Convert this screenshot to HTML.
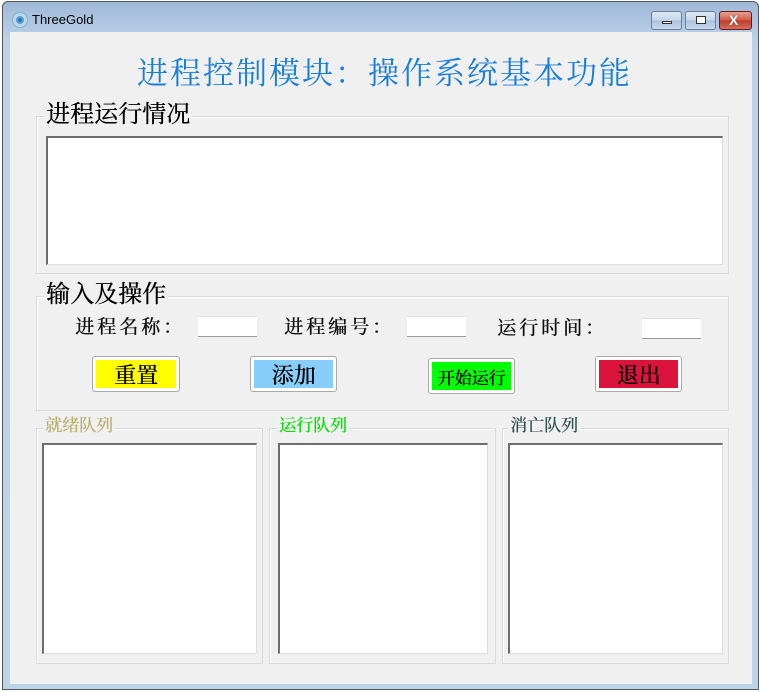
<!DOCTYPE html>
<html><head><meta charset="utf-8"><style>
*{margin:0;padding:0;box-sizing:border-box}
body{width:759px;height:692px;overflow:hidden;background:#fff;font-family:"Liberation Serif","Noto Serif CJK SC",serif;position:relative}
.frame{position:absolute;left:2px;top:1px;width:757px;height:689px;border:1px solid #555;border-radius:6px 6px 0 0;background:linear-gradient(#9fb9d8,#bcd2ea 40px,#bcd3ea)}
.client{position:absolute;left:10px;top:32px;width:742px;height:652px;background:#f0f0f0}
.a{position:absolute}
.grp{position:absolute;border:1px solid #d9d9d9;box-shadow:inset 1px 1px 0 #fff}
.leg{position:absolute;background:#f0f0f0;padding:0 2px;white-space:nowrap;line-height:1;text-shadow:0.4px 0 0 currentColor}
.box{position:absolute;background:#fff;border-top:2px solid #6e6e6e;border-left:2px solid #6e6e6e;border-right:1px solid #ddd;border-bottom:1px solid #ddd}
.inp{position:absolute;background:#fff;border-bottom:1px solid #999;border-top:1px solid #e0e0e0}
.btn{position:absolute;border:1px solid #aaa;border-radius:3px;background:#fff;padding:3px}
.btn div{width:100%;height:100%;display:flex;align-items:center;justify-content:center;font-size:22px;color:#000;text-shadow:0.5px 0 0 #000}
.lbl{position:absolute;font-size:19px;letter-spacing:3px;line-height:1;color:#111;text-shadow:0.5px 0 0 #111}
.wb{position:absolute;top:11px;height:19px;border:1px solid #6e7d90;border-radius:3px;background:linear-gradient(#dfe9f5,#c2d5ea 50%,#a9c0dc 51%,#c9dbef)}
</style></head><body>
<div class="frame"></div>
<svg class="a" style="left:11px;top:11px" width="18" height="18"><circle cx="9" cy="9" r="7.5" fill="#bcd7ea" stroke="#7fb2d6"/><circle cx="9" cy="9" r="4" fill="#5aa0cc"/><circle cx="9" cy="9" r="2" fill="#2b78b0"/></svg>
<div class="a" style="left:32px;top:12px;font:13px 'Liberation Sans',sans-serif;color:#000">ThreeGold</div>
<div class="wb" style="left:651px;width:31px"><div class="a" style="left:10px;top:9px;width:10px;height:3px;background:#fff;border:1px solid #333"></div></div>
<div class="wb" style="left:685px;width:31px"><div class="a" style="left:10px;top:4px;width:10px;height:8px;background:#fff;border:1px solid #333"></div></div>
<div class="wb" style="left:719px;width:33px;border-color:#6b1a14;background:linear-gradient(#e6a090,#d05a44 50%,#c0392b 51%,#d2705a)"><div class="a" style="left:9px;top:0;color:#fff;font:bold 14px 'Liberation Sans',sans-serif;text-shadow:0 0 1px #333">X</div></div>
<div class="client">
<div class="a" style="left:127px;top:16px;font-size:31px;color:#1a7fd6;letter-spacing:2px;white-space:nowrap">进程控制模块：操作系统基本功能</div>

<div class="grp" style="left:26px;top:84px;width:693px;height:158px"></div>
<div class="leg" style="left:34px;top:71px;font-size:24px;color:#000">进程运行情况</div>
<div class="box" style="left:36px;top:104px;width:677px;height:129px"></div>

<div class="grp" style="left:26px;top:264px;width:693px;height:115px"></div>
<div class="leg" style="left:34px;top:251px;font-size:24px;color:#000">输入及操作</div>
<div class="lbl" style="left:65px;top:286px">进程名称：</div>
<div class="inp" style="left:188px;top:284px;width:59px;height:21px"></div>
<div class="lbl" style="left:274px;top:286px">进程编号：</div>
<div class="inp" style="left:397px;top:284px;width:59px;height:21px"></div>
<div class="lbl" style="left:487px;top:287px">运行时间：</div>
<div class="inp" style="left:632px;top:286px;width:59px;height:21px"></div>

<div class="btn" style="left:82px;top:324px;width:88px;height:36px"><div style="background:#ffff00">重置</div></div>
<div class="btn" style="left:240px;top:324px;width:87px;height:36px"><div style="background:#87cefa">添加</div></div>
<div class="btn" style="left:418px;top:326px;width:87px;height:36px"><div style="background:#00ff00;font-size:17px">开始运行</div></div>
<div class="btn" style="left:585px;top:324px;width:87px;height:36px"><div style="background:#dc143c">退出</div></div>

<div class="grp" style="left:26px;top:396px;width:227px;height:236px"></div>
<div class="leg" style="left:33px;top:385px;font-size:17px;color:#b8b070">就绪队列</div>
<div class="box" style="left:32px;top:411px;width:215px;height:211px"></div>
<div class="grp" style="left:259px;top:396px;width:227px;height:236px"></div>
<div class="leg" style="left:267px;top:385px;font-size:17px;color:#00e000">运行队列</div>
<div class="box" style="left:268px;top:411px;width:210px;height:211px"></div>
<div class="grp" style="left:492px;top:396px;width:227px;height:236px"></div>
<div class="leg" style="left:498px;top:385px;font-size:17px;color:#2f4f4f">消亡队列</div>
<div class="box" style="left:498px;top:411px;width:215px;height:211px"></div>
</div>
</body></html>
